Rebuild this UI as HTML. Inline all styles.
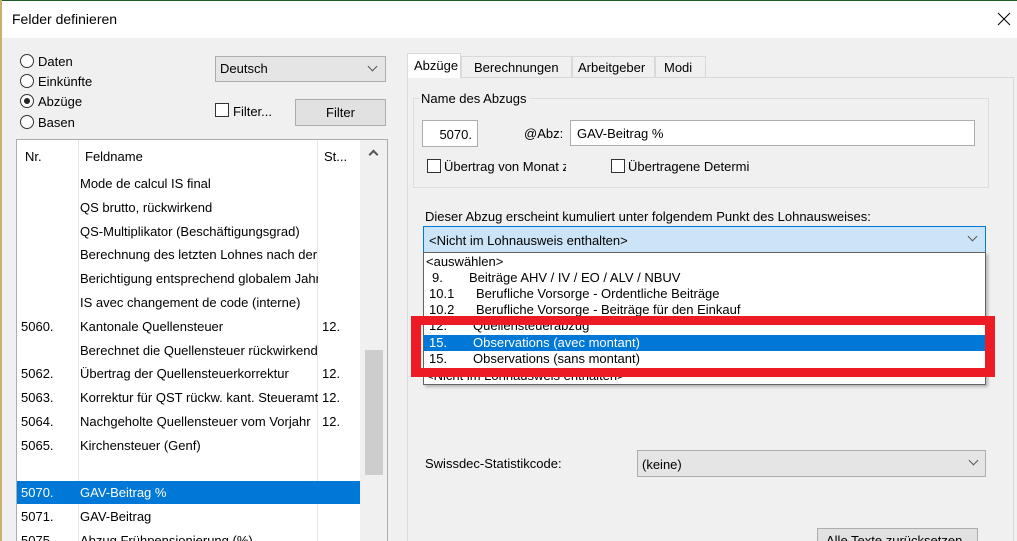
<!DOCTYPE html>
<html><head><meta charset="utf-8"><style>
*{box-sizing:border-box;margin:0;padding:0}
html,body{width:1017px;height:541px;overflow:hidden}
body{background:#f0f0f0;font-family:"Liberation Sans",Arial,sans-serif;font-size:13px;color:#000;position:relative}
.a{position:absolute;white-space:nowrap}
.rb{position:absolute;width:14px;height:14px;border:1px solid #333;border-radius:50%;background:#fff}
.cb{position:absolute;width:14px;height:14px;border:1px solid #333;background:#fff}
.row{position:absolute;left:17px;width:343px;height:24px;line-height:24px;white-space:nowrap}
.row span{position:absolute;overflow:hidden;white-space:nowrap}
.chev{position:absolute;width:7px;height:7px;border-right:1px solid #555;border-bottom:1px solid #555;transform:rotate(45deg)}
</style></head><body>
<div class="a" style="left:0;top:0;width:1017px;height:38px;background:#fff;border-top:1px solid #1e5b2a"></div>
<div class="a" style="left:0;top:0;width:2px;height:541px;background:#c8b070"></div>
<div class="a" style="left:12px;top:11px;font-size:14px">Felder definieren</div>
<svg class="a" style="left:997px;top:12px" width="14" height="14"><path d="M1 1L13 13M13 1L1 13" stroke="#000" stroke-width="1"/></svg>

<div class="rb" style="left:20px;top:54px"></div><div class="a" style="left:38px;top:54px">Daten</div>
<div class="rb" style="left:20px;top:74px"></div><div class="a" style="left:38px;top:74px">Einkünfte</div>
<div class="rb" style="left:20px;top:94px"></div><div class="a" style="left:24px;top:98px;width:6px;height:6px;border-radius:50%;background:#222"></div><div class="a" style="left:38px;top:94px">Abzüge</div>
<div class="rb" style="left:20px;top:115px"></div><div class="a" style="left:38px;top:115px">Basen</div>

<div class="a" style="left:215px;top:56px;width:171px;height:26px;background:#e5e5e5;border:1px solid #adadad;line-height:24px;padding-left:4px">Deutsch</div>
<div class="chev" style="left:369px;top:63px"></div>
<div class="cb" style="left:215px;top:103px"></div><div class="a" style="left:233px;top:104px">Filter...</div>
<div class="a" style="left:295px;top:99px;width:91px;height:27px;background:#e1e1e1;border:1px solid #adadad;text-align:center;line-height:25px">Filter</div>

<div class="a" style="left:16px;top:139px;width:372px;height:410px;background:#fff;border:1px solid #adadad"></div>
<div class="a" style="left:78px;top:140px;width:1px;height:401px;background:#e5e5e5"></div>
<div class="a" style="left:317px;top:140px;width:1px;height:401px;background:#e5e5e5"></div>
<div class="a" style="left:25px;top:149px">Nr.</div>
<div class="a" style="left:85px;top:149px">Feldname</div>
<div class="a" style="left:324px;top:149px">St...</div>
<div class="a" style="left:360px;top:140px;width:27px;height:401px;background:#f0f0f0"></div>
<div class="a" style="left:370px;top:151px;width:7px;height:7px;border-left:2px solid #555;border-top:2px solid #555;transform:rotate(45deg)"></div>
<div class="a" style="left:365px;top:350px;width:18px;height:125px;background:#cdcdcd"></div>

<div class="row" style="top:172px"><span style="left:63px">Mode de calcul IS final</span></div>
<div class="row" style="top:196px"><span style="left:63px">QS brutto, rückwirkend</span></div>
<div class="row" style="top:220px"><span style="left:63px;width:238px">QS-Multiplikator (Beschäftigungsgrad)</span></div>
<div class="row" style="top:243px"><span style="left:63px;width:238px">Berechnung des letzten Lohnes nach der</span></div>
<div class="row" style="top:267px"><span style="left:63px;width:238px">Berichtigung entsprechend globalem Jahr</span></div>
<div class="row" style="top:291px"><span style="left:63px;width:238px">IS avec changement de code (interne)</span></div>
<div class="row" style="top:315px"><span style="left:4px">5060.</span><span style="left:63px">Kantonale Quellensteuer</span><span style="left:305px">12.</span></div>
<div class="row" style="top:339px"><span style="left:63px;width:238px">Berechnet die Quellensteuer rückwirkend</span></div>
<div class="row" style="top:362px"><span style="left:4px">5062.</span><span style="left:63px;width:238px">Übertrag der Quellensteuerkorrektur</span><span style="left:305px">12.</span></div>
<div class="row" style="top:386px"><span style="left:4px">5063.</span><span style="left:63px;width:238px">Korrektur für QST rückw. kant. Steueramt</span><span style="left:305px">12.</span></div>
<div class="row" style="top:410px"><span style="left:4px">5064.</span><span style="left:63px;width:238px">Nachgeholte Quellensteuer vom Vorjahr</span><span style="left:305px">12.</span></div>
<div class="row" style="top:434px"><span style="left:4px">5065.</span><span style="left:63px">Kirchensteuer (Genf)</span></div>
<div class="row" style="top:481px;background:#0078d7;color:#fff;height:23px"><span style="left:4px">5070.</span><span style="left:63px">GAV-Beitrag %</span></div>
<div class="row" style="top:505px"><span style="left:4px">5071.</span><span style="left:63px">GAV-Beitrag</span></div>
<div class="row" style="top:529px"><span style="left:4px">5075.</span><span style="left:63px">Abzug Frühpensionierung (%)</span></div>

<div class="a" style="left:407px;top:77px;width:607px;height:470px;border:1px solid #d9d9d9;background:#f0f0f0"></div>
<div class="a" style="left:407px;top:53px;width:54px;height:25px;background:#fff;border:1px solid #d9d9d9;border-bottom:none;padding:4px 0 0 6px">Abzüge</div>
<div class="a" style="left:461px;top:56px;width:111px;height:21px;border:1px solid #d9d9d9;border-bottom:none;padding:3px 0 0 12px">Berechnungen</div>
<div class="a" style="left:572px;top:56px;width:83px;height:21px;border:1px solid #d9d9d9;border-bottom:none;padding:3px 0 0 5px">Arbeitgeber</div>
<div class="a" style="left:655px;top:56px;width:51px;height:21px;border:1px solid #d9d9d9;border-bottom:none;padding:3px 0 0 8px">Modi</div>

<div class="a" style="left:413px;top:98px;width:576px;height:90px;border:1px solid #dcdcdc"></div>
<div class="a" style="left:419px;top:91px;background:#f0f0f0;padding:0 2px">Name des Abzugs</div>
<div class="a" style="left:422px;top:120px;width:56px;height:27px;background:#fff;border:1px solid #adadad;text-align:right;padding:6px 5px 0 0">5070.</div>
<div class="a" style="left:524px;top:126px">@Abz:</div>
<div class="a" style="left:570px;top:120px;width:405px;height:26px;background:#fff;border:1px solid #adadad;padding:5px 0 0 6px">GAV-Beitrag %</div>
<div class="cb" style="left:427px;top:159px"></div><div class="a" style="left:444px;top:159px;width:122px;overflow:hidden">Übertrag von Monat zu Monat</div>
<div class="cb" style="left:611px;top:159px"></div><div class="a" style="left:628px;top:159px">Übertragene Determi</div>

<div class="a" style="left:425px;top:209px">Dieser Abzug erscheint kumuliert unter folgendem Punkt des Lohnausweises:</div>
<div class="a" style="left:423px;top:226px;width:563px;height:27px;background:#cce4f7;border:1px solid #0078d7;padding:6px 0 0 5px">&lt;Nicht im Lohnausweis enthalten&gt;</div>
<div class="chev" style="left:969px;top:233px"></div>
<div class="a" style="left:423px;top:252px;width:563px;height:133px;background:#fff;border:1px solid #646464;box-shadow:2px 2px 3px rgba(0,0,0,.25);overflow:hidden">
<div class="a" style="left:2px;top:1px">&lt;auswählen&gt;</div>
<div class="a" style="left:8px;top:17px">9.</div><div class="a" style="left:45px;top:17px">Beiträge AHV / IV / EO / ALV / NBUV</div>
<div class="a" style="left:5px;top:33px">10.1</div><div class="a" style="left:52px;top:33px">Berufliche Vorsorge - Ordentliche Beiträge</div>
<div class="a" style="left:5px;top:49px">10.2</div><div class="a" style="left:52px;top:49px">Berufliche Vorsorge - Beiträge für den Einkauf</div>
<div class="a" style="left:5px;top:65px">12.</div><div class="a" style="left:49px;top:65px">Quellensteuerabzug</div>
<div class="a" style="left:0;top:82px;width:561px;height:16px;background:#0078d7"></div>
<div class="a" style="left:5px;top:82px;color:#fff">15.</div><div class="a" style="left:49px;top:82px;color:#fff">Observations (avec montant)</div>
<div class="a" style="left:5px;top:98px">15.</div><div class="a" style="left:49px;top:98px">Observations (sans montant)</div>
<div class="a" style="left:2px;top:115px">&lt;Nicht im Lohnausweis enthalten&gt;</div>
</div>
<div class="a" style="left:411px;top:316px;width:584px;height:61px;border:10px solid #ed1c24;border-top-width:9px;border-bottom-width:9px"></div>

<div class="a" style="left:425px;top:456px">Swissdec-Statistikcode:</div>
<div class="a" style="left:637px;top:450px;width:349px;height:27px;background:#e5e5e5;border:1px solid #adadad;padding:6px 0 0 4px">(keine)</div>
<div class="chev" style="left:970px;top:457px"></div>
<div class="a" style="left:817px;top:528px;width:161px;height:26px;background:#e1e1e1;border:1px solid #adadad;padding:4px 0 0 8px">Alle Texte zurücksetzen</div>
</body></html>
